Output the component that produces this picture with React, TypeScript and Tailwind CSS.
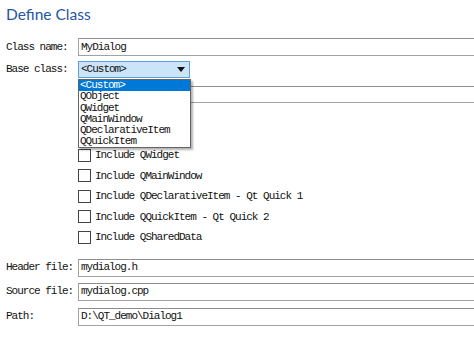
const mono = "font-['Liberation_Mono',monospace] text-[11px] tracking-[-1px] text-[#111]";

const baseClasses = ["<Custom>", "QObject", "QWidget", "QMainWindow", "QDeclarativeItem", "QQuickItem"];

// the first two rows sit under the open dropdown
const includes = [
  "",
  "",
  "Include QWidget",
  "Include QMainWindow",
  "Include QDeclarativeItem - Qt Quick 1",
  "Include QQuickItem - Qt Quick 2",
  "Include QSharedData",
];

function Field({ label, value, className }: { label: string; value: string; className?: string }) {
  return (
    <div className={`flex h-[18px] items-center ${className ?? ""}`}>
      <div className={`w-[72px] shrink-0 ${mono}`}>{label}</div>
      <div className={`flex h-full w-[420px] shrink-0 items-center border border-[#a2a2a2] border-t-[#8e8e8e] bg-white pl-[2px] ${mono}`}>
        {value}
      </div>
    </div>
  );
}

function Check({ label }: { label: string }) {
  if (!label) return <div className="h-[20.5px]" />;
  return (
    <div className="flex h-[20.5px] items-center pl-[72px]">
      <div className="h-[13px] w-[13px] shrink-0 border border-[#444] bg-white" />
      <span className={`ml-[4px] whitespace-nowrap ${mono}`}>{label}</span>
    </div>
  );
}

export default function App() {
  return (
    <div className="relative h-[343px] w-[474px] overflow-hidden bg-white px-[6px] pt-[4px]">
      <h1 className="h-[20px] font-['Lato',sans-serif] text-[15.5px] leading-[20px] text-[#2456a4]">Define Class</h1>

      <Field label="Class name:" value="MyDialog" className="mt-[14px]" />

      <div className="mt-[5px] flex h-[17px] items-center">
        <div className={`w-[72px] shrink-0 ${mono}`}>Base class:</div>
        <div className="relative h-full w-[112px] shrink-0">
          <div className={`flex h-full items-center justify-between border border-[#5b9fdc] bg-[#cce4f7] pl-[2px] pr-[4px] ${mono}`}>
            <span>&lt;Custom&gt;</span>
            <svg width="8" height="5" viewBox="0 0 8 5">
              <path d="M0 0h8L4 5z" fill="#111" />
            </svg>
          </div>
          <div className="absolute left-0 top-[18px] z-10 h-[69px] w-[113px] border border-[#646464] bg-white shadow-[2px_2px_2px_rgba(0,0,0,0.3)]">
            {baseClasses.map((c, i) => (
              <div
                key={c}
                className={`h-[11.3px] pl-[1px] leading-[11.3px] ${mono} ${i === 0 ? "bg-[#0078d7] !text-white" : ""}`}
              >
                {c}
              </div>
            ))}
          </div>
        </div>
      </div>

      <div className="mt-[8px] flex h-[17px] pl-[72px]">
        <div className="h-full w-[420px] shrink-0 border border-[#a2a2a2] border-t-[#8e8e8e] bg-white" />
      </div>

      <div className="mt-[1px]">
        {includes.map((l, i) => (
          <Check key={i} label={l} />
        ))}
      </div>

      <Field label="Header file:" value="mydialog.h" className="mt-[11px]" />
      <Field label="Source file:" value="mydialog.cpp" className="mt-[6px]" />
      <Field label="Path:" value="D:\QT_demo\Dialog1" className="mt-[7px]" />
    </div>
  );
}
